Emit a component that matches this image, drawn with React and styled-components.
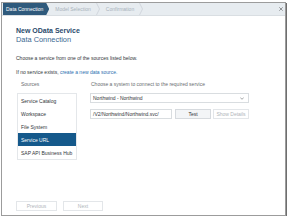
import React from "react";
import styled, { createGlobalStyle } from "styled-components";

const Global = createGlobalStyle`
  html, body { margin: 0; padding: 0; background: #ffffff; }
  body { font-family: "Liberation Sans", Arial, sans-serif; color: #32363a; }
  * { box-sizing: border-box; }
`;

const Dialog = styled.div`
  margin: 2px 0 0 1px;
  width: 285px;
  height: 214px;
  border: 1px solid #9c9c9c;
  box-shadow: 1px 1px 0 #6e6e6e;
  display: flex;
  flex-direction: column;
  background: #fff;
`;

const Header = styled.div`
  height: 13px;
  margin-top: 0;
  padding-left: 1px;
  background: #e7ecf0;
  border-bottom: 1px solid #d9dee2;
  display: flex;
  align-items: stretch;
  position: relative;
`;

const Step = styled.div`
  display: flex;
  align-items: center;
  font-size: 5px;
  line-height: 1;
  white-space: nowrap;
  padding: ${(p) => (p.$active ? "0 6px 0 3px" : "0 5px 0 6px")};
  color: ${(p) => (p.$active ? "#ffffff" : "#a9b3bc")};
  background: ${(p) => (p.$active ? "#2f5a7c" : "transparent")};
  clip-path: ${(p) =>
    p.$active
      ? "polygon(0 0, calc(100% - 3px) 0, 100% 50%, calc(100% - 3px) 100%, 0 100%)"
      : "none"};
`;

const Chevron = styled.svg`
  width: 4px;
  height: 12px;
  flex: none;
`;

const Close = styled.svg`
  position: absolute;
  right: 2px;
  top: 4px;
  width: 4px;
  height: 4px;
`;

const Body = styled.div`
  flex: 1;
  display: flex;
  flex-direction: column;
  padding: 0 14px;
`;

const Title = styled.div`
  margin-top: 10px;
  font-size: 7px;
  line-height: 9px;
  font-weight: bold;
  color: #2a4a6c;
`;

const Subtitle = styled.div`
  font-size: 7.4px;
  line-height: 9px;
  color: #3a6891;
`;

const Text = styled.div`
  margin-top: ${(p) => p.$mt}px;
  font-size: 5px;
  line-height: 7px;
  color: #32363a;
  white-space: nowrap;
`;

const Link = styled.span`
  color: #2a6fb0;
`;

const Columns = styled.div`
  margin-top: 5px;
  padding-left: 1px;
  display: flex;
  gap: 13px;
`;

const LeftCol = styled.div`
  width: 60px;
  display: flex;
  flex-direction: column;
`;

const RightCol = styled.div`
  width: 159px;
  display: flex;
  flex-direction: column;
`;

const Label = styled.div`
  font-size: 5px;
  line-height: 7px;
  color: #6a6d70;
  white-space: nowrap;
  padding-left: ${(p) => p.$pl || 0}px;
`;

const List = styled.div`
  margin-top: 5px;
  border: 1px solid #e4e7ea;
  display: flex;
  flex-direction: column;
`;

const Item = styled.div`
  height: 13px;
  padding-left: 3px;
  display: flex;
  align-items: center;
  font-size: 5px;
  white-space: nowrap;
  color: ${(p) => (p.$sel ? "#ffffff" : "#32363a")};
  background: ${(p) => (p.$sel ? "#15598b" : "#ffffff")};
`;

const Select = styled.div`
  margin-top: 5px;
  height: 10px;
  border: 1px solid #d9dde0;
  display: flex;
  align-items: center;
  justify-content: space-between;
  padding: 0 4px 0 2px;
  font-size: 5px;
  color: #32363a;
  white-space: nowrap;
`;

const Row = styled.div`
  margin-top: 6px;
  display: flex;
  height: 10px;
`;

const Input = styled.div`
  width: 82px;
  border: 1px solid #d9dde0;
  display: flex;
  align-items: center;
  padding-left: 2px;
  font-size: 5px;
  color: #32363a;
  white-space: nowrap;
  overflow: hidden;
`;

const Button = styled.div`
  width: ${(p) => p.$w}px;
  margin-left: ${(p) => p.$ml || 0}px;
  height: 10px;
  border: 1px solid ${(p) => (p.$disabled ? "#e3e6e9" : "#d6dade")};
  background: ${(p) => (p.$disabled ? "#ffffff" : "#f3f5f7")};
  color: ${(p) => (p.$disabled ? "#b0b5ba" : "#32363a")};
  display: flex;
  align-items: center;
  justify-content: center;
  font-size: 5px;
  white-space: nowrap;
`;

const Footer = styled.div`
  margin-top: auto;
  padding: 0 0 4px 14px;
  display: flex;
`;

const ChevronSep = () => (
  <Chevron viewBox="0 0 4 12">
    <polyline points="0.5,0 3.5,6 0.5,12" fill="none" stroke="#c3cad0" strokeWidth="0.6" />
  </Chevron>
);

export default function App() {
  return (
    <>
      <Global />
      <Dialog>
        <Header>
          <Step $active>Data Connection</Step>
          <Step>Model Selection</Step>
          <ChevronSep />
          <Step>Confirmation</Step>
          <ChevronSep />
          <Close viewBox="0 0 4 4">
            <path d="M0.3 0.3 L3.7 3.7 M3.7 0.3 L0.3 3.7" stroke="#6a6d70" strokeWidth="0.7" />
          </Close>
        </Header>
        <Body>
          <Title>New OData Service</Title>
          <Subtitle>Data Connection</Subtitle>
          <Text $mt={11}>Choose a service from one of the sources listed below.</Text>
          <Text $mt={7}>
            If no service exists, <Link>create a new data source.</Link>
          </Text>
          <Columns>
            <LeftCol>
              <Label $pl={4}>Sources</Label>
              <List>
                <Item>Service Catalog</Item>
                <Item>Workspace</Item>
                <Item>File System</Item>
                <Item $sel>Service URL</Item>
                <Item>SAP API Business Hub</Item>
              </List>
            </LeftCol>
            <RightCol>
              <Label $pl={1}>Choose a system to connect to the required service</Label>
              <Select>
                <span>Northwind - Northwind</span>
                <svg width="4" height="3" viewBox="0 0 4 3">
                  <polyline points="0.3,0.5 2,2.3 3.7,0.5" fill="none" stroke="#6a6d70" strokeWidth="0.6" />
                </svg>
              </Select>
              <Row>
                <Input>/V2/Northwind/Northwind.svc/</Input>
                <Button $w={36} $ml={3}>Test</Button>
                <Button $w={36} $ml={2} $disabled>Show Details</Button>
              </Row>
            </RightCol>
          </Columns>
        </Body>
        <Footer>
          <Button $w={41} $disabled>Previous</Button>
          <Button $w={40} $ml={6} $disabled>Next</Button>
        </Footer>
      </Dialog>
    </>
  );
}
